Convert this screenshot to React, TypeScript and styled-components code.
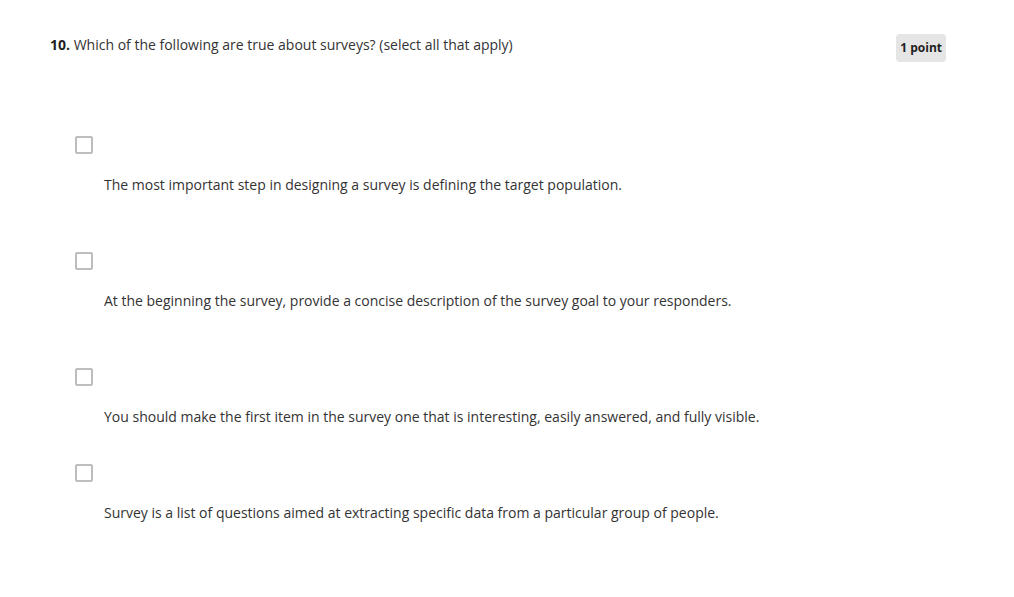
import React from 'react';
import styled, { createGlobalStyle } from 'styled-components';

const GlobalStyle = createGlobalStyle`
  body {
    margin: 0;
    background: #ffffff;
    font-family: 'Open Sans', 'Liberation Sans', sans-serif;
    color: #333333;
  }
`;

const Page = styled.div`
  padding: 33px 68px 0 50px;
`;

const Header = styled.div`
  display: flex;
  justify-content: space-between;
  align-items: flex-start;
`;

const Prompt = styled.div`
  font-size: 14px;
  line-height: 24px;
  color: #333333;
  b {
    font-weight: 700;
    color: #1f1f1f;
  }
`;

const Badge = styled.span`
  margin-top: 1px;
  padding: 4px 4px;
  background: #e5e5e5;
  border-radius: 4px;
  font-size: 12px;
  font-weight: 700;
  line-height: 20px;
  color: #1f1f1f;
`;

const Options = styled.div`
  display: flex;
  flex-direction: column;
  padding: 74px 0 0 25px;
`;

const Option = styled.label<{ $after: number }>`
  display: flex;
  flex-direction: column;
  gap: 21px;
  margin-bottom: ${(p) => p.$after}px;
  cursor: pointer;
`;

const Box = styled.span`
  display: block;
  width: 14px;
  height: 14px;
  border: 2px solid #bdbdbd;
  border-radius: 2px;
  background: #ffffff;
`;

const OptionText = styled.span`
  padding-left: 29px;
  font-size: 14px;
  line-height: 20px;
  color: #333333;
`;

const options = [
  { text: 'The most important step in designing a survey is defining the target population.', after: 57 },
  { text: 'At the beginning the survey, provide a concise description of the survey goal to your responders.', after: 57 },
  { text: 'You should make the first item in the survey one that is interesting, easily answered, and fully visible.', after: 37 },
  { text: 'Survey is a list of questions aimed at extracting specific data from a particular group of people.', after: 0 },
];

export default function App() {
  return (
    <Page>
      <GlobalStyle />
      <Header>
        <Prompt>
          <b>10.</b> Which of the following are true about surveys? (select all that apply)
        </Prompt>
        <Badge>1 point</Badge>
      </Header>
      <Options>
        {options.map((o) => (
          <Option key={o.text} $after={o.after}>
            <Box />
            <OptionText>{o.text}</OptionText>
          </Option>
        ))}
      </Options>
    </Page>
  );
}
